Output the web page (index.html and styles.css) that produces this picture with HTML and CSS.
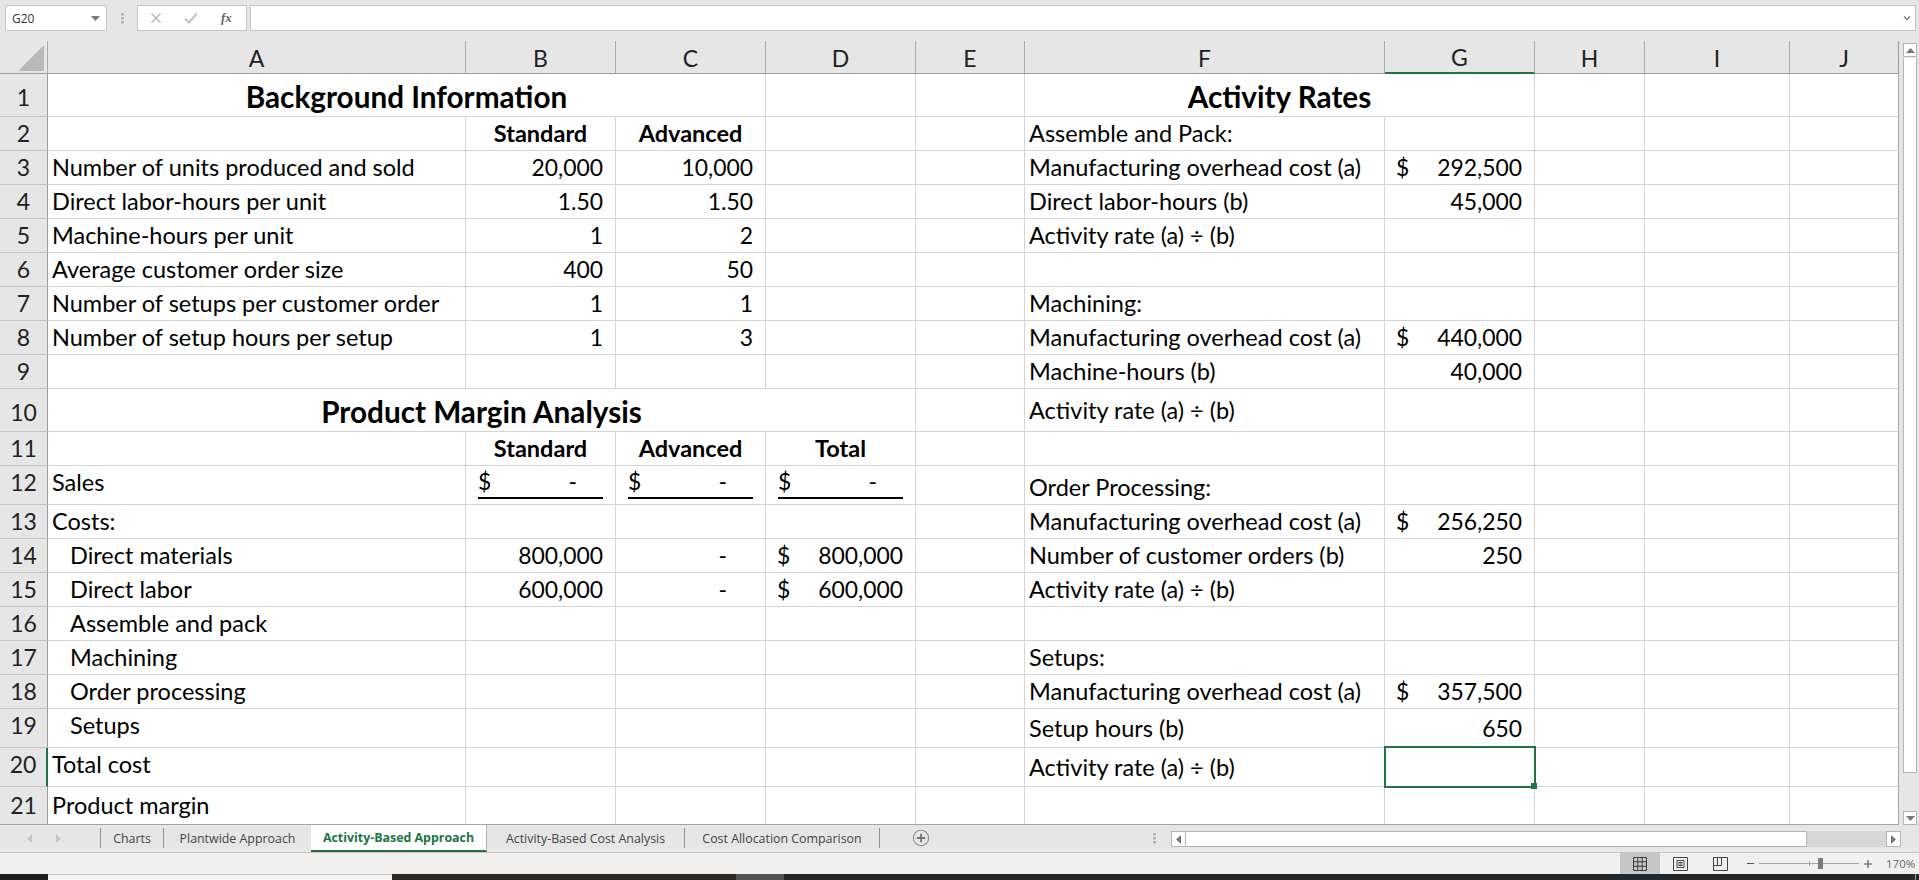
FILE: index.html
```html
<!DOCTYPE html>
<html lang="en">
<head>
<meta charset="utf-8">
<title>Activity-Based Approach</title>
<link rel="stylesheet" href="styles.css">
</head>
<body>
<div class="app">
  <header class="formula-bar">
    <div class="name-box"><span>G20</span><svg class="caret" width="9" height="5" viewBox="0 0 9 5"><path d="M0 0h9L4.500 5z" fill="#777"/></svg></div>
    <svg class="grip" width="3" height="11" viewBox="0 0 3 11"><path d="M0 0h3v2.500H0zM0 4h3v2.500H0zM0 8h3v2.500H0z" fill="#b4b4b4"/></svg>
    <div class="fx-box">
      <svg width="12" height="12" viewBox="0 0 12 12"><path d="M1.500 1.500l9 9M10.500 1.500l-9 9" stroke="#bdbdbd" stroke-width="1.600" fill="none"/></svg>
      <svg width="14" height="12" viewBox="0 0 14 12"><path d="M1 6.500l4 4 8-9" stroke="#c4c4c4" stroke-width="2.200" fill="none"/></svg>
      <span class="fx">fx</span>
    </div>
    <div class="formula-input"><svg width="8" height="5" viewBox="0 0 8 5"><path d="M1 .5l3 3 3-3" stroke="#777" stroke-width="1.300" fill="none"/></svg></div>
  </header>

  <main class="workspace">
    <div class="sheet">
      <table class="grid">
        <colgroup><col class="c-head"><col class="c-a"><col class="c-n"><col class="c-n"><col class="c-n"><col class="c-e"><col class="c-f"><col class="c-n"><col class="c-h"><col class="c-i"><col class="c-e"></colgroup>
        <thead>
          <tr class="r-head"><th class="corner"><svg width="26" height="26" viewBox="0 0 26 26"><path d="M26 0v26H0z" fill="#b8b8b8"/></svg></th><th>A</th><th>B</th><th>C</th><th>D</th><th>E</th><th>F</th><th class="active-col">G</th><th>H</th><th>I</th><th>J</th></tr>
        </thead>
        <tbody>
          <tr class="r-title"><th class="low">1</th><td colspan="3" class="title">Background Information</td><td></td><td></td><td colspan="2" class="title">Activity Rates</td><td></td><td></td><td></td></tr>
          <tr><th>2</th><td></td><td class="hd">Standard</td><td class="hd">Advanced</td><td></td><td></td><td class="tx">Assemble and Pack:</td><td></td><td></td><td></td><td></td></tr>
          <tr><th>3</th><td class="tx">Number of units produced and sold</td><td class="nm">20,000</td><td class="nm">10,000</td><td></td><td></td><td class="tx">Manufacturing overhead cost (a)</td><td><div class="acct"><span>$</span><span>292,500</span></div></td><td></td><td></td><td></td></tr>
          <tr><th>4</th><td class="tx">Direct labor-hours per unit</td><td class="nm">1.50</td><td class="nm">1.50</td><td></td><td></td><td class="tx">Direct labor-hours (b)</td><td class="nm">45,000</td><td></td><td></td><td></td></tr>
          <tr><th>5</th><td class="tx">Machine-hours per unit</td><td class="nm">1</td><td class="nm">2</td><td></td><td></td><td class="tx">Activity rate (a) ÷ (b)</td><td></td><td></td><td></td><td></td></tr>
          <tr><th>6</th><td class="tx">Average customer order size</td><td class="nm">400</td><td class="nm">50</td><td></td><td></td><td></td><td></td><td></td><td></td><td></td></tr>
          <tr><th>7</th><td class="tx">Number of setups per customer order</td><td class="nm">1</td><td class="nm">1</td><td></td><td></td><td class="tx">Machining:</td><td></td><td></td><td></td><td></td></tr>
          <tr><th>8</th><td class="tx">Number of setup hours per setup</td><td class="nm">1</td><td class="nm">3</td><td></td><td></td><td class="tx">Manufacturing overhead cost (a)</td><td><div class="acct"><span>$</span><span>440,000</span></div></td><td></td><td></td><td></td></tr>
          <tr><th>9</th><td></td><td></td><td></td><td></td><td></td><td class="tx">Machine-hours (b)</td><td class="nm">40,000</td><td></td><td></td><td></td></tr>
          <tr class="r-title"><th class="low">10</th><td colspan="4" class="title">Product Margin Analysis</td><td></td><td class="tx">Activity rate (a) ÷ (b)</td><td></td><td></td><td></td><td></td></tr>
          <tr><th>11</th><td></td><td class="hd">Standard</td><td class="hd">Advanced</td><td class="hd">Total</td><td></td><td></td><td></td><td></td><td></td><td></td></tr>
          <tr class="r-tall"><th class="top">12</th><td class="tx top">Sales</td><td class="top"><div class="acct under"><span>$</span><span class="nil">-</span></div></td><td class="top"><div class="acct under"><span>$</span><span class="nil">-</span></div></td><td class="top"><div class="acct under"><span>$</span><span class="nil">-</span></div></td><td></td><td class="tx bot">Order Processing:</td><td></td><td></td><td></td><td></td></tr>
          <tr><th>13</th><td class="tx">Costs:</td><td></td><td></td><td></td><td></td><td class="tx">Manufacturing overhead cost (a)</td><td><div class="acct"><span>$</span><span>256,250</span></div></td><td></td><td></td><td></td></tr>
          <tr><th>14</th><td class="tx ind">Direct materials</td><td class="nm">800,000</td><td class="nm dash">-</td><td><div class="acct"><span>$</span><span>800,000</span></div></td><td></td><td class="tx">Number of customer orders (b)</td><td class="nm">250</td><td></td><td></td><td></td></tr>
          <tr><th>15</th><td class="tx ind">Direct labor</td><td class="nm">600,000</td><td class="nm dash">-</td><td><div class="acct"><span>$</span><span>600,000</span></div></td><td></td><td class="tx">Activity rate (a) ÷ (b)</td><td></td><td></td><td></td><td></td></tr>
          <tr><th>16</th><td class="tx ind">Assemble and pack</td><td></td><td></td><td></td><td></td><td></td><td></td><td></td><td></td><td></td></tr>
          <tr><th>17</th><td class="tx ind">Machining</td><td></td><td></td><td></td><td></td><td class="tx">Setups:</td><td></td><td></td><td></td><td></td></tr>
          <tr><th>18</th><td class="tx ind">Order processing</td><td></td><td></td><td></td><td></td><td class="tx">Manufacturing overhead cost (a)</td><td><div class="acct"><span>$</span><span>357,500</span></div></td><td></td><td></td><td></td></tr>
          <tr class="r-tall"><th class="top">19</th><td class="tx ind top">Setups</td><td></td><td></td><td></td><td></td><td class="tx">Setup hours (b)</td><td class="nm">650</td><td></td><td></td><td></td></tr>
          <tr class="r-tall"><th class="active-row top">20</th><td class="tx top">Total cost</td><td></td><td></td><td></td><td></td><td class="tx">Activity rate (a) ÷ (b)</td><td class="selected"><div class="sel-box"></div><div class="sel-handle"></div></td><td></td><td></td><td></td></tr>
          <tr class="r-last"><th>21</th><td class="tx">Product margin</td><td></td><td></td><td></td><td></td><td></td><td></td><td></td><td></td><td></td></tr>
        </tbody>
      </table>
    </div>
    <aside class="vscroll">
      <div class="sb-btn up"><svg width="9" height="5" viewBox="0 0 9 5"><path d="M4.500 0L9 5H0z" fill="#777"/></svg></div>
      <div class="sb-thumb"></div>
      <div class="sb-btn down"><svg width="9" height="5" viewBox="0 0 9 5"><path d="M0 0h9L4.500 5z" fill="#777"/></svg></div>
    </aside>
  </main>

  <nav class="tabbar">
    <div class="tab-nav">
      <svg width="5" height="9" viewBox="0 0 5 9"><path d="M5 0v9L0 4.500z" fill="#c4c4c4"/></svg>
      <svg width="5" height="9" viewBox="0 0 5 9"><path d="M0 0v9l5-4.500z" fill="#c4c4c4"/></svg>
    </div>
    <div class="tab t-charts">Charts</div>
    <div class="tab t-plant">Plantwide Approach</div>
    <div class="tab t-active">Activity-Based Approach</div>
    <div class="tab t-cost">Activity-Based Cost Analysis</div>
    <div class="tab t-alloc">Cost Allocation Comparison</div>
    <svg class="add" width="18" height="18" viewBox="0 0 18 18"><circle cx="9" cy="9" r="7.700" fill="none" stroke="#8f8f8f" stroke-width="1.100"/><path d="M9 4.800v8.400M4.800 9h8.400" stroke="#777" stroke-width="1.800"/></svg>
    <svg class="grip tab-grip" width="3" height="11" viewBox="0 0 3 11"><path d="M0 0h3v2.500H0zM0 4h3v2.500H0zM0 8h3v2.500H0z" fill="#b4b4b4"/></svg>
    <div class="hscroll">
      <div class="hs-btn"><svg width="5" height="9" viewBox="0 0 5 9"><path d="M5 0v9L0 4.500z" fill="#777"/></svg></div>
      <div class="hs-thumb"></div>
      <div class="hs-track"></div>
      <div class="hs-btn"><svg width="5" height="9" viewBox="0 0 5 9"><path d="M0 0v9l5-4.500z" fill="#777"/></svg></div>
    </div>
  </nav>

  <footer class="statusbar">
    <div class="view active-view"><svg width="14" height="14" viewBox="0 0 14 14"><path d="M.5.500h13v13H.5zM.5 4.800h13M.5 9.200h13M4.800.500v13M9.200.500v13" fill="none" stroke="#3c3c3c"/></svg></div>
    <div class="view"><svg width="15" height="14" viewBox="0 0 15 14"><path d="M.5.500h14v13H.5zM4 3.500h7v7H4zM5.500 5.500h4M5.500 7h4M5.500 8.500h4" fill="none" stroke="#444"/></svg></div>
    <div class="view"><svg width="15" height="14" viewBox="0 0 15 14"><path d="M.5.500h14v13H.5zM.5 8.500h8V.500M4.500.500v8" fill="none" stroke="#444"/></svg></div>
    <div class="zoomctl">
      <span class="zc-minus"></span>
      <div class="slider"><i class="tick"></i><i class="knob"></i></div>
      <svg width="8" height="8" viewBox="0 0 8 8"><path d="M4 0v8M0 4h8" stroke="#555" stroke-width="1.200"/></svg>
      <span class="pct">170%</span>
    </div>
  </footer>

  <div class="taskbar"><i class="tb tb-a"></i><i class="tb tb-b"></i><i class="tb tb-c"></i><i class="tb tb-d"></i><i class="tb tb-e"></i><i class="tb tb-f"></i></div>
</div>
</body>
</html>
```

FILE: styles.css
```css
* { box-sizing: border-box; }
html, body { margin: 0; padding: 0; height: 100%; overflow: hidden; }
body { font-family: Lato, "Liberation Sans", sans-serif; background: #e6e6e6; color: #000; }
.app { width: 1919px; height: 880px; display: flex; flex-direction: column; overflow: hidden; }

/* formula bar */
.formula-bar { height: 41px; flex: none; display: flex; align-items: flex-start; padding: 5px 3px 0 5px; }
.name-box { width: 102px; height: 26px; background: #fff; border: 1px solid #c6c6c6; display: flex; align-items: center; justify-content: space-between; padding: 0 3px 0 6px; font: 12px "Open Sans", sans-serif; color: #333; }
.caret { margin-right: 3px; }
.grip { display: block; flex: none; }
.formula-bar .grip { margin: 8px 13px 0 14px; }
.fx-box { width: 110px; height: 26px; background: #fff; border: 1px solid #c6c6c6; display: flex; align-items: center; padding-left: 12px; gap: 22px; }
.fx { font: italic bold 13px "Liberation Serif", serif; color: #666; margin-left: 1px; }
.formula-input { flex: 1; height: 26px; margin-left: 3px; background: #fff; border: 1px solid #c6c6c6; display: flex; align-items: center; justify-content: flex-end; padding-right: 4px; }

/* sheet */
.workspace { flex: none; height: 784px; display: flex; }
.sheet { width: 1899px; height: 784px; overflow: hidden; border-bottom: 1px solid #a6a6a6; background: #fff; }
.grid { table-layout: fixed; width: 1899px; border-collapse: separate; border-spacing: 0; font-size: 23.5px; line-height: 33px; }
.c-head { width: 48px; }
.c-a { width: 418px; }
.c-n { width: 150px; }
.c-e { width: 109px; }
.c-f { width: 360px; }
.c-h { width: 110px; }
.c-i { width: 145px; }

tr { height: 34px; }
.r-head { height: 33px; }
.r-title { height: 43px; }
.r-tall { height: 39px; }
.r-last { height: 38px; }

th { padding: 0; font-weight: 400; font-size: 23px; background: #e6e6e6; color: #222; text-align: center; }
thead th { border-right: 1px solid #ababab; border-bottom: 1px solid #9c9c9c; padding-top: 2px; line-height: 29px; }
thead th:last-child { border-right-color: #9c9c9c; }
thead .corner { padding: 4px 3px 0 0; text-align: right; vertical-align: top; line-height: 0; }
.corner svg { display: block; margin-left: auto; }
.active-col { border-bottom: 2px solid #217346 !important; }
tbody th { border-right: 1px solid #9c9c9c; border-bottom: 1px solid #c8c8c8; }
th.low { vertical-align: bottom; padding-bottom: 2px; }
.active-row { border-right: 2px solid #217346; }

td { padding: 0; border-right: 1px solid #d4d4d4; border-bottom: 1px solid #d4d4d4; white-space: nowrap; overflow: visible; }
tr td:last-child { border-right-color: #a6a6a6; }
.title { font-size: 29.7px; font-weight: 700; text-align: center; padding-top: 2px; }
.hd { font-weight: 700; text-align: center; }
.tx { padding-left: 4px; }
.ind { padding-left: 22px; }
.nm { text-align: right; padding-right: 12px; font-size: 22.9px; }
.dash { padding-right: 38px; }
.top { vertical-align: top; }
.bot { vertical-align: bottom; }
.acct { display: flex; justify-content: space-between; margin: 0 12px 0 11px; font-size: 22.9px; }
.acct.under { margin: 0 12px; padding: 0 1px 0 0; line-height: 31px; border-bottom: 2px solid #000; }
.nil { padding-right: 25px; }

.selected { position: relative; }
.sel-box { position: absolute; left: -1px; top: -2px; right: -2px; bottom: -2px; border: 2px solid #217346; }
.sel-handle { position: absolute; right: -3px; bottom: -3px; width: 6px; height: 6px; background: #217346; border: 0; }

/* vertical scrollbar */
.vscroll { width: 20px; display: flex; flex-direction: column; padding: 2px 2px 0 4px; }
.sb-btn { flex: none; height: 14px; background: #fff; border: 1px solid #b4b4b4; display: flex; align-items: center; justify-content: center; }
.sb-thumb { height: 716px; background: #fff; border: 1px solid #b4b4b4; border-top: 0; margin-top: 1px; }
.up { margin-top: 0; }
.down { margin-top: 38px; }

/* tabs */
.tabbar { flex: none; height: 28px; display: flex; align-items: flex-start; border-bottom: 1px solid #c6c6c6; font: 12.4px "Open Sans", sans-serif; color: #444; position: relative; }
.tab-nav { width: 100px; height: 27px; display: flex; align-items: center; padding: 0 0 0 27px; gap: 24px; }
.tab { height: 20px; margin-top: 3px; display: flex; align-items: center; justify-content: center; border-left: 1px solid #8f8f8f; white-space: nowrap; }
.t-charts { width: 63px; }
.t-plant { width: 148px; }
.t-active { width: 176px; height: 27px; margin-top: 0; background: #fff; color: #217346; font-weight: 700; border-left: 0; border-bottom: 2px solid #217346; border-right: 1px solid #b4b4b4; }
.t-cost { width: 197px; border-left: 0; }
.t-alloc { width: 196px; border-right: 1px solid #8f8f8f; }
.add { flex: none; margin: 4px 0 0 32px; }
.tab-grip { margin: 8px 0 0 223px; }
.hscroll { display: flex; height: 16px; margin: 6px 0 0 15px; }
.hs-btn { width: 15px; height: 16px; background: #fff; border: 1px solid #b4b4b4; display: flex; align-items: center; justify-content: center; }
.hs-thumb { width: 621px; background: #fff; border: 1px solid #b4b4b4; border-left: 0; }
.hs-track { width: 79px; background: #d8d8d8; }

/* status bar */
.statusbar { flex: none; height: 21px; background: #f1f0ee; display: flex; padding-left: 1620px; position: relative; }
.view { width: 40px; display: flex; align-items: center; justify-content: center; }
.active-view { background: #c6c6c6; }
.zoomctl { display: flex; align-items: center; margin-left: 7px; }
.zc-minus { width: 7px; height: 1px; background: #555; }
.slider { position: relative; width: 100px; height: 1px; background: #a8a8a8; margin: 0 5px; }
.tick { position: absolute; left: 50px; top: -2px; width: 1px; height: 5px; background: #a8a8a8; }
.knob { position: absolute; left: 59px; top: -5px; width: 5px; height: 11px; background: #7a7a7a; }
.pct { font: 11.5px "Open Sans", sans-serif; color: #666; margin-left: 14px; }

/* strip of desktop below */
.taskbar { flex: none; height: 6px; display: flex; }
.tb { display: block; height: 6px; }
.tb-a { width: 48px; background: #1e1e1e; }
.tb-b { width: 344px; background: #f2f2f2; border-top: 1px solid #c8c8c8; }
.tb-c { width: 344px; background: #2b2724; }
.tb-d { width: 48px; background: #555; }
.tb-e { width: 1131px; background: #23282c; }
.tb-f { width: 4px; background: #23282c; border-left: 1px solid #999; }
```
